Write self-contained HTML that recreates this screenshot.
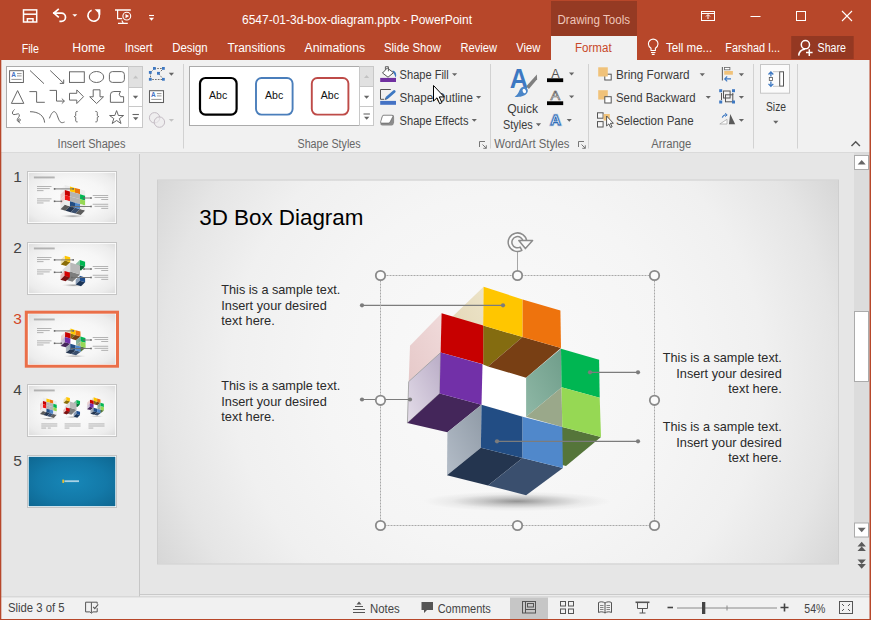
<!DOCTYPE html>
<html><head><meta charset="utf-8"><title>PowerPoint</title>
<style>
html,body{margin:0;padding:0;background:#e6e6e6;overflow:hidden}
svg{display:block;font-family:"Liberation Sans",sans-serif}
</style></head><body>
<svg width="871" height="620" viewBox="0 0 871 620">
<rect x="0" y="0" width="871" height="620" fill="#e6e6e6"/>
<rect x="0" y="0" width="871" height="60" fill="#b7472a"/>
<rect x="551" y="1" width="86" height="35" fill="#953a23"/>
<rect x="551" y="36" width="86" height="24" fill="#f1f1f1"/>
<rect x="791.2" y="36" width="62.5" height="23" fill="#943822"/>
<text x="242" y="23.5" font-size="12" fill="#fff" text-anchor="start" textLength="230" lengthAdjust="spacingAndGlyphs">6547-01-3d-box-diagram.pptx - PowerPoint</text>
<text x="557.5" y="23.8" font-size="12" fill="#efc6b9" text-anchor="start" textLength="72.5" lengthAdjust="spacingAndGlyphs">Drawing Tools</text>
<text x="21.7" y="52.5" font-size="12.3" fill="#fff" text-anchor="start" textLength="17.2" lengthAdjust="spacingAndGlyphs">File</text>
<text x="72.3" y="51.7" font-size="12.3" fill="#fff" text-anchor="start" textLength="32.7" lengthAdjust="spacingAndGlyphs">Home</text>
<text x="124.7" y="51.7" font-size="12.3" fill="#fff" text-anchor="start" textLength="27.9" lengthAdjust="spacingAndGlyphs">Insert</text>
<text x="172.2" y="51.7" font-size="12.3" fill="#fff" text-anchor="start" textLength="35.5" lengthAdjust="spacingAndGlyphs">Design</text>
<text x="227.4" y="51.7" font-size="12.3" fill="#fff" text-anchor="start" textLength="57.8" lengthAdjust="spacingAndGlyphs">Transitions</text>
<text x="304.5" y="51.7" font-size="12.3" fill="#fff" text-anchor="start" textLength="60.6" lengthAdjust="spacingAndGlyphs">Animations</text>
<text x="384" y="51.7" font-size="12.3" fill="#fff" text-anchor="start" textLength="56.9" lengthAdjust="spacingAndGlyphs">Slide Show</text>
<text x="460.5" y="51.7" font-size="12.3" fill="#fff" text-anchor="start" textLength="36.5" lengthAdjust="spacingAndGlyphs">Review</text>
<text x="516.3" y="51.7" font-size="12.3" fill="#fff" text-anchor="start" textLength="24.1" lengthAdjust="spacingAndGlyphs">View</text>
<text x="575" y="51.7" font-size="12.3" fill="#c8482a" text-anchor="start" textLength="36.6" lengthAdjust="spacingAndGlyphs">Format</text>
<text x="666" y="51.7" font-size="12.3" fill="#fff" text-anchor="start" textLength="46.2" lengthAdjust="spacingAndGlyphs">Tell me...</text>
<text x="725.3" y="51.7" font-size="12.3" fill="#fff" text-anchor="start" textLength="54.8" lengthAdjust="spacingAndGlyphs">Farshad I...</text>
<text x="817.6" y="51.7" font-size="12.3" fill="#fff" text-anchor="start" textLength="28.3" lengthAdjust="spacingAndGlyphs">Share</text>
<g fill="none" stroke="#fff" stroke-width="1.1"><path d="M651 50.5v-2.2c-1.6-1.2-2.6-2.6-2.6-4.4a4.8 4.8 0 0 1 9.6 0c0 1.8-1 3.2-2.6 4.4v2.2z"/><path d="M651 52.5h4.4M651.8 54.4h2.8"/></g>
<g fill="none" stroke="#fff" stroke-width="1.500"><circle cx="805.400" cy="44.700" r="4.100"/><path d="M798.700 55.600c0.300-3.600 2.700-5.900 6.200-6.300"/><path d="M806 52.500h6.600M809.300 49.200v6.700"/></g>
<g fill="none" stroke="#fff" stroke-width="1"><rect x="701.5" y="11.5" width="13" height="9"/><path d="M701.5 13.5h13"/><path d="M708 19v-4M706 16.5l2-2 2 2"/></g>
<path d="M750.5 16.5h10" stroke="#fff" stroke-width="1"/>
<rect x="796.5" y="11.5" width="9" height="9" fill="none" stroke="#fff" stroke-width="1"/>
<path d="M842 11l10 10M852 11l-10 10" stroke="#fff" stroke-width="1.1" fill="none"/>
<g fill="none" stroke="#fff" stroke-width="1.5"><rect x="23.5" y="9.9" width="13.2" height="12.1"/><path d="M23.5 14.2h13.2"/><path d="M27.4 22v-3.2h5.600v3.200"/></g>
<g fill="none" stroke="#fff" stroke-width="1.700"><path d="M53 13.100h8.400a4.100 4.100 0 0 1 0 8.200h-2" /><path d="M58.800 8.900l-4.900 4.200 4.900 4.200"/></g>
<path d="M72.3 14.2h5l-2.5 2.6z" fill="#fff"/>
<g fill="none" stroke="#fff" stroke-width="1.600"><path d="M91.600 10.200a5.700 5.700 0 1 0 7.200 2.800"/><path d="M94.600 9.300h5.800v5.800z" fill="#fff" stroke="none"/></g>
<g fill="none" stroke="#fff"><path d="M115 10h15.800" stroke-width="1.500"/><path d="M117.600 10v8.700h4.600" stroke-width="1.200"/><circle cx="126.800" cy="16.100" r="3.900" stroke-width="1.100"/><path d="M121.800 20.500l1.400 2.500M118 23.400h9.800" stroke-width="1.100"/></g><path d="M125.500 13.900l3.600 2.200-3.600 2.200z" fill="#fff"/>
<path d="M149 15.500h5" stroke="#fff" stroke-width="1.100"/>
<path d="M149.0 17.8h5l-2.5 3z" fill="#fff"/>
<rect x="1" y="60" width="869" height="92.300" fill="#f1f1f1"/>
<rect x="1" y="152" width="869" height="1" fill="#dadada"/>
<rect x="183.0" y="64" width="1" height="84.5" fill="#d2d2d2"/>
<rect x="490.0" y="64" width="1" height="84.5" fill="#d2d2d2"/>
<rect x="588.0" y="64" width="1" height="84.5" fill="#d2d2d2"/>
<rect x="753.0" y="64" width="1" height="84.5" fill="#d2d2d2"/>
<rect x="797.0" y="64" width="1" height="84.5" fill="#d2d2d2"/>
<rect x="6.5" y="66.5" width="136" height="61" fill="#fff" stroke="#ababab" stroke-width="1"/>
<rect x="128.5" y="66.5" width="14" height="21" fill="#e1e1e1" stroke="#c8c8c8" stroke-width="1"/>
<rect x="128.5" y="87.5" width="14" height="19" fill="#fff" stroke="#c8c8c8" stroke-width="1"/>
<rect x="128.5" y="106.5" width="14" height="21" fill="#fff" stroke="#c8c8c8" stroke-width="1"/>
<path d="M133 78.5l2.6-3 2.6 3z" fill="#c3c3c3"/>
<path d="M132.8 95.8h5.4l-2.7 3z" fill="#666"/>
<path d="M132.5 114.5h6.4" stroke="#666" stroke-width="1.1"/>
<path d="M133.0 117.2h5.4l-2.7 3z" fill="#666"/>
<g fill="none" stroke="#606060" stroke-width="0.95" stroke-linejoin="miter">
<rect x="9.6" y="70.7" width="13.8" height="11.8" fill="#fff"/>
<path d="M30 70.5l14 13.2"/>
<path d="M50.2 70.5l13.4 12.8M63.7 79.6v3.8h-3.9"/>
<rect x="69.5" y="71.8" width="14.8" height="10.6"/>
<ellipse cx="96.5" cy="77" rx="7.2" ry="5.5"/>
<rect x="109.4" y="71.6" width="15" height="10.8" rx="3" ry="3"/>
<path d="M17.6 90.6l6.2 12.8h-12.4z"/>
<path d="M29.4 91.6h7.2v10.7h8.2"/>
<path d="M49.6 90.4h6.9v10.7h7.8M61.8 98.6l2.6 2.5-2.6 2.5"/>
<path d="M69.5 93.3h7.3v-3.4l6.7 6.8-6.7 6.8v-3.4h-7.3z"/>
<path d="M93.2 89.8h6.8v7h3.5l-6.9 6.7-6.9-6.700h3.500z"/>
<path d="M110.400 102.300v-7.500q0-3.300 3.500-3.300h6.600q-2.600 2.800 0 5.200h3.100v5.600z"/>
<path d="M14.600 109.500C12 111.500 11.600 114.500 14 114.600C16.500 114.700 18.500 112.800 19.300 114.600C20.200 116.800 16.400 118.800 17.200 120.600C17.800 122 20.600 121.400 20.400 119.800C20.200 118.400 18 118.800 18.200 120.600C18.400 121.800 19.400 122.600 20 123.300"/>
<path d="M30 111.700c8.600 0 14.200 4 14.600 10.900"/>
<path d="M49.400 118.400c3.200-8.600 6-8.900 8.400-1.400c2.200 6.400 3.800 6.200 6.800 5"/>
<path d="M77.600 111.400c-1.900 0-1.900 0.500-1.900 2v1.600c0 1-0.400 1.500-1.500 1.600c1.100 0.100 1.500 0.600 1.500 1.600v1.700c0 1.500 0 2 1.900 2"/>
<path d="M95.400 111.400c1.900 0 1.900 0.500 1.900 2v1.600c0 1 0.400 1.500 1.500 1.600c-1.100 0.100-1.500 0.600-1.500 1.600v1.700c0 1.500 0 2-1.900 2"/>
<path d="M116.600 110.600l1.800 4.900h5.200l-4.200 3.100 1.600 4.900-4.400-3-4.400 3 1.600-4.900-4.200-3.100h5.200z"/>
</g>
<g><text x="11.2" y="77.10000000000001" font-size="6.5" font-weight="bold" fill="#4472c4">A</text><path d="M17.0 73.60000000000001h4.6M17.0 75.9h4.6M11.4 79.4h10.2" stroke="#8a8a8a" stroke-width="0.9" fill="none"/></g>
<g fill="none" stroke="#5e5e5e" stroke-width="0.9" stroke-dasharray="1.6 1.2"><path d="M150.500 72.500l4-4h9l-5 5 5 6h-13z"/></g>
<rect x="153.0" y="67.0" width="2.800" height="2.800" fill="#3d78c2"/>
<rect x="162.0" y="67.0" width="2.800" height="2.800" fill="#3d78c2"/>
<rect x="148.9" y="71.0" width="2.800" height="2.800" fill="#3d78c2"/>
<rect x="157.0" y="71.9" width="2.800" height="2.800" fill="#3d78c2"/>
<rect x="148.9" y="77.9" width="2.800" height="2.800" fill="#3d78c2"/>
<rect x="162.0" y="77.9" width="2.800" height="2.800" fill="#3d78c2"/>
<path d="M168.8 72.85h5.2l-2.6 2.9z" fill="#666"/>
<rect x="149.500" y="90.700" width="14" height="11.800" fill="#fff" stroke="#606060" stroke-width="1.050"/>
<g><text x="151.1" y="97.10000000000001" font-size="6.5" font-weight="bold" fill="#4472c4">A</text><path d="M156.9 93.60000000000001h4.6M156.9 95.9h4.6M151.3 99.4h10.2" stroke="#8a8a8a" stroke-width="0.9" fill="none"/></g>
<g fill="#efecef" fill-opacity="0.6" stroke="#c4bcc4" stroke-width="1"><circle cx="154.600" cy="117.800" r="5.200"/><circle cx="159.400" cy="122.100" r="5.200"/></g>
<path d="M168.8 118.95h5.2l-2.6 2.9z" fill="#c3c3c3"/>
<text x="57.6" y="148" font-size="12" fill="#666666" text-anchor="start" textLength="67.9" lengthAdjust="spacingAndGlyphs">Insert Shapes</text>
<rect x="189.500" y="66.500" width="184" height="59" fill="#fff" stroke="#ababab" stroke-width="1"/>
<rect x="359.500" y="66.500" width="14" height="20" fill="#e1e1e1" stroke="#c8c8c8" stroke-width="1"/>
<rect x="359.500" y="86.500" width="14" height="20" fill="#fff" stroke="#c8c8c8" stroke-width="1"/>
<rect x="359.500" y="106.500" width="14" height="19" fill="#fff" stroke="#c8c8c8" stroke-width="1"/>
<path d="M364 78l2.600-3 2.600 3z" fill="#c3c3c3"/>
<path d="M363.90000000000003 95.8h5.4l-2.7 3z" fill="#666"/>
<path d="M363.500 114h6.400" stroke="#666" stroke-width="1.100"/>
<path d="M364.0 116.7h5.4l-2.7 3z" fill="#666"/>
<rect x="200" y="78" width="36.600" height="36.600" rx="5.500" fill="#fff" stroke="#000" stroke-width="2.2"/>
<text x="209" y="99.2" font-size="10.5" fill="#111" text-anchor="start" textLength="18.2" lengthAdjust="spacingAndGlyphs">Abc</text>
<rect x="256" y="78" width="36.600" height="36.600" rx="5.500" fill="#fff" stroke="#4a7ebb" stroke-width="1.9"/>
<text x="265" y="99.2" font-size="10.5" fill="#111" text-anchor="start" textLength="18.2" lengthAdjust="spacingAndGlyphs">Abc</text>
<rect x="311.8" y="78" width="36.600" height="36.600" rx="5.500" fill="#fff" stroke="#be4b48" stroke-width="1.9"/>
<text x="320.8" y="99.2" font-size="10.5" fill="#111" text-anchor="start" textLength="18.2" lengthAdjust="spacingAndGlyphs">Abc</text>
<text x="297.5" y="148" font-size="12" fill="#666666" text-anchor="start" textLength="63.1" lengthAdjust="spacingAndGlyphs">Shape Styles</text>
<text x="399.6" y="79" font-size="12.3" fill="#3b3b3b" text-anchor="start" textLength="49.2" lengthAdjust="spacingAndGlyphs">Shape Fill</text>
<path d="M452.0 73.14999999999999h5.2l-2.6 2.9z" fill="#666"/>
<text x="399.6" y="102" font-size="12.3" fill="#3b3b3b" text-anchor="start" textLength="73.4" lengthAdjust="spacingAndGlyphs">Shape Outline</text>
<path d="M476.0 95.95h5.2l-2.6 2.9z" fill="#666"/>
<text x="399.6" y="125" font-size="12.3" fill="#3b3b3b" text-anchor="start" textLength="68.9" lengthAdjust="spacingAndGlyphs">Shape Effects</text>
<path d="M471.7 118.95h5.2l-2.6 2.9z" fill="#666"/>
<rect x="380.200" y="77.900" width="15.800" height="4.100" fill="#7030a0"/>
<path d="M392.600 70.400c2.400 0.300 3.900 2.400 3.600 5.400c-0.100 0.700-0.400 1.300-0.800 1.800c-0.300-2.200-1.200-4-2.800-5.400z" fill="#3d78c2"/>
<g fill="#fff" stroke="#555" stroke-width="1" stroke-linejoin="round"><path d="M382.500 73l4.800-5 6.200 4.700-5.500 4.500z"/><path d="M385.400 69.800v-3.100h3v4.600" fill="none" stroke-width="0.900"/></g>
<rect x="380.200" y="100.900" width="15.800" height="3.900" fill="#4472c4"/>
<g fill="none" stroke="#555" stroke-width="1"><path d="M390.800 89.500h-10.300v9.800h3.800"/></g><path d="M385 99.800l0.700-2.800 7.500-6.500a1.400 1.400 0 0 1 2 2l-7.500 6.500z" fill="#3d78c2"/><path d="M385 99.800l0.500-1.900 1.300 1.300z" fill="#555"/>
<path d="M383.600 115h8.600q2.200 0 1.900 2.200v5.200q-0.300 2.600-2.600 3h-9q-2.600-0.200-2-2.400l1.300-6q0.400-2 1.800-2z" fill="#8c8c8c"/><path d="M383.800 115.200h8.200q1.600 0 0.800 1.500l-2.800 5.400q-0.500 1-1.700 1h-6.600q-1.500 0-1-1.500l1.700-5.300q0.400-1.100 1.400-1.100z" fill="#fff" stroke="#666" stroke-width="0.700"/>
<g fill="none" stroke="#777" stroke-width="1"><path d="M479.5 147.0v-5.500h5.500"/><path d="M482.5 144.5l3.800 3.800M486.3 145.3v3h-3"/></g>
<g fill="none" stroke="#777" stroke-width="1"><path d="M578.5 147.0v-5.500h5.500"/><path d="M581.5 144.5l3.800 3.800M585.3 145.3v3h-3"/></g>
<text x="509.700" y="88.100" font-size="27.400" font-weight="bold" fill="#3d78c2" textLength="18.300" lengthAdjust="spacingAndGlyphs">A</text>
<path d="M536.900 74.600l-10.600 11.600 2.600 2.800 8.200-9.800z" fill="#7f7f7f"/><path d="M525.600 87c-3-0.900-5.200 0.900-6.200 3.600c-0.900 2.600-2.400 4.600-4.800 6.200c5.200 0.700 10.800-0.500 12.800-4.200c0.900-1.700 0.500-4-1.800-5.600z" fill="#4a86c8"/><ellipse cx="524.300" cy="91" rx="1.600" ry="2.300" fill="#fff" transform="rotate(-25 524.300 91)"/>
<text x="507.2" y="113" font-size="12.3" fill="#3b3b3b" text-anchor="start" textLength="30.8" lengthAdjust="spacingAndGlyphs">Quick</text>
<text x="503.1" y="129" font-size="12.3" fill="#3b3b3b" text-anchor="start" textLength="29.6" lengthAdjust="spacingAndGlyphs">Styles</text>
<path d="M535.9 123.25h5.2l-2.6 2.9z" fill="#666"/>
<text x="551.200" y="77.700" font-size="12.800" fill="#555" textLength="8.400" lengthAdjust="spacingAndGlyphs">A</text>
<rect x="547" y="78.300" width="16.200" height="3.800" fill="#000"/>
<path d="M569.0 72.55h5.2l-2.6 2.9z" fill="#666"/>
<text x="550.600" y="99.600" font-size="13.300" fill="#fff" stroke="#555" stroke-width="0.650" textLength="9.600" lengthAdjust="spacingAndGlyphs">A</text>
<rect x="547" y="101.300" width="16.200" height="3.800" fill="#000"/>
<path d="M569.0 95.45h5.2l-2.6 2.9z" fill="#666"/>
<text x="550.200" y="125" font-size="15" font-weight="bold" fill="#fff" stroke="#3d78c2" stroke-width="2.600" stroke-opacity="0.350" textLength="10.600" lengthAdjust="spacingAndGlyphs">A</text>
<text x="550.200" y="125" font-size="15" font-weight="bold" fill="#fff" stroke="#2f6db8" stroke-width="1" textLength="10.600" lengthAdjust="spacingAndGlyphs">A</text>
<path d="M566.6999999999999 118.95h5.2l-2.6 2.9z" fill="#666"/>
<text x="494.3" y="148" font-size="12" fill="#666666" text-anchor="start" textLength="75.2" lengthAdjust="spacingAndGlyphs">WordArt Styles</text>
<text x="616" y="79" font-size="12.3" fill="#3b3b3b" text-anchor="start" textLength="73.6" lengthAdjust="spacingAndGlyphs">Bring Forward</text>
<path d="M699.6999999999999 73.25h5.2l-2.6 2.9z" fill="#666"/>
<text x="616" y="102" font-size="12.3" fill="#3b3b3b" text-anchor="start" textLength="79.6" lengthAdjust="spacingAndGlyphs">Send Backward</text>
<path d="M705.6999999999999 95.95h5.2l-2.6 2.9z" fill="#666"/>
<text x="616" y="125" font-size="12.3" fill="#3b3b3b" text-anchor="start" textLength="77.6" lengthAdjust="spacingAndGlyphs">Selection Pane</text>
<rect x="604.800" y="74.200" width="6.400" height="5.800" fill="#fff" stroke="#555" stroke-width="1"/><rect x="598.200" y="67.300" width="9.600" height="9.200" fill="#f0c27a"/>
<rect x="598.200" y="90.200" width="9.600" height="9.300" fill="#f0c27a"/><rect x="604.800" y="96.700" width="6.400" height="6.300" fill="#fff" stroke="#555" stroke-width="1"/>
<g fill="#f8f8f8" stroke="#555" stroke-width="1"><rect x="597.500" y="112.800" width="5.600" height="5.400"/><rect x="597.500" y="121.600" width="5.600" height="5.400"/></g><rect x="603.600" y="114" width="6.200" height="6.500" fill="#f0c27a"/><path d="M606.600 116v10l2.300-2.100 1.700 3.600 1.500-0.700-1.700-3.500h3z" fill="#fff" stroke="#444" stroke-width="0.900" stroke-linejoin="round"/>
<path d="M722.400 67v13.600" stroke="#666" stroke-width="1.100"/><rect x="724.500" y="67.400" width="5.400" height="2.400" fill="#fff" stroke="#666" stroke-width="0.800"/><rect x="724.200" y="71" width="8.700" height="3.700" fill="#f0c27a"/><path d="M731 78.900h-6.400M727.200 76.500l-2.500 2.400 2.500 2.400" fill="none" stroke="#3d78c2" stroke-width="1.100"/>
<path d="M738.8 73.25h5.2l-2.6 2.9z" fill="#666"/>
<g fill="none" stroke="#555" stroke-width="1"><rect x="723.500" y="91" width="6.600" height="7"/><rect x="725.500" y="94.800" width="7.300" height="7"/><path d="M721.500 93v7M732.800 93v2"/></g>
<rect x="719.2" y="89.2" width="3" height="3" fill="#3d78c2"/>
<rect x="732.0" y="89.2" width="3" height="3" fill="#3d78c2"/>
<rect x="719.2" y="100.5" width="3" height="3" fill="#3d78c2"/>
<rect x="732.0" y="100.5" width="3" height="3" fill="#3d78c2"/>
<path d="M738.8 95.95h5.2l-2.6 2.9z" fill="#666"/>
<path d="M719.800 124h7.200v-4.700z" fill="#fff" stroke="#aaa" stroke-width="0.800"/><path d="M728.900 124.300h6.300l-5-10.300z" fill="#5a5a5a"/><path d="M722.300 117.600c0.400-1.700 1.800-2.700 4-2.800" fill="none" stroke="#3d78c2" stroke-width="1.100"/><path d="M725.200 113.200l2 1.700-2 1.700" fill="none" stroke="#3d78c2" stroke-width="1"/>
<path d="M738.8 118.95h5.2l-2.6 2.9z" fill="#666"/>
<text x="651.2" y="148" font-size="12" fill="#666666" text-anchor="start" textLength="40.1" lengthAdjust="spacingAndGlyphs">Arrange</text>
<rect x="760.500" y="64.500" width="29" height="28.700" fill="#fbfbfb" stroke="#c6c6c6" stroke-width="1"/>
<rect x="779.700" y="71.800" width="3.800" height="14.300" fill="#fff" stroke="#555" stroke-width="1"/>
<g fill="none" stroke="#3d78c2" stroke-width="1.300"><path d="M770.900 72v4.600M768.500 74.500l2.400-2.500 2.400 2.500M770.900 86.400v-4.800M768.500 83.900l2.400 2.500 2.400-2.500"/></g><rect x="769.300" y="77.500" width="3.300" height="3" fill="#fff" stroke="#555" stroke-width="0.800"/><path d="M773.500 71.700h6M773.500 86.300h6" stroke="#777" stroke-width="0.800" stroke-dasharray="1 1"/>
<text x="766" y="111" font-size="12.3" fill="#3b3b3b" text-anchor="start" textLength="20" lengthAdjust="spacingAndGlyphs">Size</text>
<path d="M773.1999999999999 120.75h5.2l-2.6 2.9z" fill="#666"/>
<path d="M851.500 146l4.200-4.200 4.200 4.200" fill="none" stroke="#555" stroke-width="1.500"/>
<path d="M433.500 85.500v15.600l3.500-3.300 2.600 5.900 2.300-1-2.600-5.800h4.900z" fill="#fff" stroke="#000" stroke-width="1" stroke-linejoin="miter"/>
<rect x="139" y="154" width="1" height="442.500" fill="#c6c6c6"/>
<defs><radialGradient id="thumbbg" cx="50%" cy="50%" r="68%"><stop offset="0" stop-color="#fcfcfc"/><stop offset="0.550" stop-color="#f6f6f6"/><stop offset="0.850" stop-color="#ececec"/><stop offset="1" stop-color="#e0e0e0"/></radialGradient></defs>
<rect x="27.500" y="171.5" width="89" height="52" fill="#fff" stroke="#c4c4c4" stroke-width="1"/>
<rect x="28.700" y="172.8" width="86.600" height="49.400" fill="url(#thumbbg)"/>
<rect x="33.9" y="176.5" width="20.800" height="1.900" fill="#8a8a8a" opacity="0.600"/>
<rect x="37.00" y="186.10" width="14.50" height="0.9" fill="#9a9a9a" opacity="0.8"/>
<rect x="37.00" y="188.15" width="12.76" height="0.9" fill="#9a9a9a" opacity="0.8"/>
<rect x="37.00" y="190.20" width="6.53" height="0.9" fill="#9a9a9a" opacity="0.8"/>
<rect x="37.00" y="198.40" width="14.50" height="0.9" fill="#9a9a9a" opacity="0.8"/>
<rect x="37.00" y="200.45" width="12.76" height="0.9" fill="#9a9a9a" opacity="0.8"/>
<rect x="37.00" y="202.50" width="6.53" height="0.9" fill="#9a9a9a" opacity="0.8"/>
<rect x="92.70" y="195.00" width="15.50" height="0.9" fill="#9a9a9a" opacity="0.8"/>
<rect x="94.56" y="197.05" width="13.64" height="0.9" fill="#9a9a9a" opacity="0.8"/>
<rect x="101.22" y="199.10" width="6.98" height="0.9" fill="#9a9a9a" opacity="0.8"/>
<rect x="92.70" y="203.80" width="15.50" height="0.9" fill="#9a9a9a" opacity="0.8"/>
<rect x="94.56" y="205.85" width="13.64" height="0.9" fill="#9a9a9a" opacity="0.8"/>
<rect x="101.22" y="207.90" width="6.98" height="0.9" fill="#9a9a9a" opacity="0.8"/>
<ellipse cx="72.90" cy="216.10" rx="13.00" ry="1.80" fill="url(#shadow)"/>
<polygon points="64.90,185.10 60.50,189.60 60.50,194.54 64.90,190.04" fill="#f2f2f2"/>
<polygon points="64.90,190.04 60.50,194.54 60.50,199.48 64.90,194.98" fill="#ecc9c9"/>
<polygon points="64.90,194.98 60.50,199.48 60.50,204.42 64.90,199.92" fill="#f0cfcf"/>
<polygon points="64.90,199.92 60.50,204.42 60.50,209.36 64.90,204.86" fill="#e9e9e9"/>
<polygon points="64.90,204.86 69.95,206.26 65.55,210.76 60.50,209.36" fill="#5a5a5a"/>
<polygon points="69.95,206.26 75.00,207.66 70.60,212.16 65.55,210.76" fill="#24354f"/>
<polygon points="75.00,207.66 80.05,209.06 75.65,213.56 70.60,212.16" fill="#3a4f6e"/>
<polygon points="80.05,209.06 85.10,210.46 80.70,214.96 75.65,213.56" fill="#5e5e5e"/>
<polygon points="64.90,185.10 69.95,186.50 69.95,191.44 64.90,190.04" fill="#ececec"/>
<polygon points="69.95,186.50 75.00,187.90 75.00,192.84 69.95,191.44" fill="#ffc600"/>
<polygon points="75.00,187.90 80.05,189.30 80.05,194.24 75.00,192.84" fill="#ee730d"/>
<polygon points="80.05,189.30 85.10,190.70 85.10,195.64 80.05,194.24" fill="#ececec"/>
<polygon points="64.90,190.04 69.95,191.44 69.95,196.38 64.90,194.98" fill="#c70000"/>
<polygon points="69.95,191.44 75.00,192.84 75.00,197.78 69.95,196.38" fill="#b4b4b4"/>
<polygon points="75.00,192.84 80.05,194.24 80.05,199.18 75.00,197.78" fill="#b4b4b4"/>
<polygon points="80.05,194.24 85.10,195.64 85.10,200.58 80.05,199.18" fill="#00b652"/>
<polygon points="64.90,194.98 69.95,196.38 69.95,201.32 64.90,199.92" fill="#f01515"/>
<polygon points="69.95,196.38 75.00,197.78 75.00,202.72 69.95,201.32" fill="#b4b4b4"/>
<polygon points="75.00,197.78 80.05,199.18 80.05,204.12 75.00,202.72" fill="#b4b4b4"/>
<polygon points="80.05,199.18 85.10,200.58 85.10,205.52 80.05,204.12" fill="#96d854"/>
<polygon points="64.90,199.92 69.95,201.32 69.95,206.26 64.90,204.86" fill="#ececec"/>
<polygon points="69.95,201.32 75.00,202.72 75.00,207.66 69.95,206.26" fill="#224d84"/>
<polygon points="75.00,202.72 80.05,204.12 80.05,209.06 75.00,207.66" fill="#5088cb"/>
<polygon points="80.05,204.12 85.10,205.52 85.10,210.46 80.05,209.06" fill="#ececec"/>
<path d="M54.5 188.9H73.2" stroke="#6e6e6e" stroke-width="0.900"/><rect x="53.8" y="188.1" width="1.500" height="1.600" fill="#666"/><rect x="72.5" y="188.1" width="1.500" height="1.600" fill="#666"/>
<path d="M54.5 201.3H61.3" stroke="#6e6e6e" stroke-width="0.900"/><rect x="53.8" y="200.5" width="1.500" height="1.600" fill="#666"/><rect x="60.599999999999994" y="200.5" width="1.500" height="1.600" fill="#666"/>
<path d="M83.9 198H91" stroke="#6e6e6e" stroke-width="0.900"/><rect x="83.2" y="197.2" width="1.500" height="1.600" fill="#666"/><rect x="90.3" y="197.2" width="1.500" height="1.600" fill="#666"/>
<path d="M71.8 206.5H91" stroke="#6e6e6e" stroke-width="0.900"/><rect x="71.1" y="205.7" width="1.500" height="1.600" fill="#666"/><rect x="90.3" y="205.7" width="1.500" height="1.600" fill="#666"/>
<text x="13.3" y="182.3" font-size="15.5" fill="#444" text-anchor="start">1</text>
<rect x="27.500" y="242.5" width="89" height="52" fill="#fff" stroke="#c4c4c4" stroke-width="1"/>
<rect x="28.700" y="243.8" width="86.600" height="49.400" fill="url(#thumbbg)"/>
<rect x="33.9" y="247.5" width="20.800" height="1.900" fill="#8a8a8a" opacity="0.600"/>
<rect x="37.00" y="257.10" width="14.50" height="0.9" fill="#9a9a9a" opacity="0.8"/>
<rect x="37.00" y="259.15" width="12.76" height="0.9" fill="#9a9a9a" opacity="0.8"/>
<rect x="37.00" y="261.20" width="6.53" height="0.9" fill="#9a9a9a" opacity="0.8"/>
<rect x="37.00" y="269.40" width="14.50" height="0.9" fill="#9a9a9a" opacity="0.8"/>
<rect x="37.00" y="271.45" width="12.76" height="0.9" fill="#9a9a9a" opacity="0.8"/>
<rect x="37.00" y="273.50" width="6.53" height="0.9" fill="#9a9a9a" opacity="0.8"/>
<rect x="92.70" y="266.00" width="15.50" height="0.9" fill="#9a9a9a" opacity="0.8"/>
<rect x="94.56" y="268.05" width="13.64" height="0.9" fill="#9a9a9a" opacity="0.8"/>
<rect x="101.22" y="270.10" width="6.98" height="0.9" fill="#9a9a9a" opacity="0.8"/>
<rect x="92.70" y="274.80" width="15.50" height="0.9" fill="#9a9a9a" opacity="0.8"/>
<rect x="94.56" y="276.85" width="13.64" height="0.9" fill="#9a9a9a" opacity="0.8"/>
<rect x="101.22" y="278.90" width="6.98" height="0.9" fill="#9a9a9a" opacity="0.8"/>
<ellipse cx="73.50" cy="285.20" rx="12.00" ry="1.70" fill="url(#shadow)"/>
<polygon points="79.80,260.10 75.70,264.00 75.70,268.85 79.80,264.95" fill="#8fc0a6"/>
<polygon points="79.80,264.95 85.10,266.55 81.00,270.45 75.70,268.85" fill="#0a6e35"/>
<polygon points="79.80,260.10 85.10,261.70 85.10,266.55 79.80,264.95" fill="#00b652"/>
<polygon points="79.80,275.80 75.70,279.70 75.70,284.55 79.80,280.65" fill="#8b9db5"/>
<polygon points="79.80,280.65 85.10,282.25 81.00,286.15 75.70,284.55" fill="#1c3557"/>
<polygon points="79.80,275.80 85.10,277.40 85.10,282.25 79.80,280.65" fill="#1f4f8f"/>
<polygon points="70.20,262.50 62.62,269.71 62.62,278.69 70.20,271.47" fill="#dedede"/>
<polygon points="70.20,271.47 80.00,274.43 72.42,281.65 62.62,278.69" fill="#7d7d7d"/>
<polygon points="70.20,262.50 80.00,265.46 80.00,274.43 70.20,271.47" fill="#b9b9b9"/>
<polygon points="64.90,255.70 60.80,259.60 60.80,264.45 64.90,260.55" fill="#f0e2b0"/>
<polygon points="64.90,260.55 70.20,262.15 66.10,266.05 60.80,264.45" fill="#8a6d08"/>
<polygon points="64.90,255.70 70.20,257.30 70.20,262.15 64.90,260.55" fill="#ffc600"/>
<polygon points="64.50,271.00 60.40,274.90 60.40,279.75 64.50,275.85" fill="#e8bcbc"/>
<polygon points="64.50,275.85 69.80,277.45 65.70,281.35 60.40,279.75" fill="#7a1010"/>
<polygon points="64.50,271.00 69.80,272.60 69.80,277.45 64.50,275.85" fill="#d40000"/>
<path d="M54.5 259.9H73.2" stroke="#6e6e6e" stroke-width="0.900"/><rect x="53.8" y="259.09999999999997" width="1.500" height="1.600" fill="#666"/><rect x="72.5" y="259.09999999999997" width="1.500" height="1.600" fill="#666"/>
<path d="M54.5 272.3H61.3" stroke="#6e6e6e" stroke-width="0.900"/><rect x="53.8" y="271.5" width="1.500" height="1.600" fill="#666"/><rect x="60.599999999999994" y="271.5" width="1.500" height="1.600" fill="#666"/>
<path d="M83.9 269H91" stroke="#6e6e6e" stroke-width="0.900"/><rect x="83.2" y="268.2" width="1.500" height="1.600" fill="#666"/><rect x="90.3" y="268.2" width="1.500" height="1.600" fill="#666"/>
<path d="M71.8 277.5H91" stroke="#6e6e6e" stroke-width="0.900"/><rect x="71.1" y="276.7" width="1.500" height="1.600" fill="#666"/><rect x="90.3" y="276.7" width="1.500" height="1.600" fill="#666"/>
<text x="13.3" y="253.3" font-size="15.5" fill="#444" text-anchor="start">2</text>
<rect x="26.300" y="312.2" width="91.200" height="54" fill="#fff" stroke="#ea6f49" stroke-width="3"/>
<rect x="28.700" y="314.2" width="86.600" height="49.400" fill="url(#thumbbg)"/>
<rect x="28.700" y="314.8" width="86.600" height="49.400" fill="url(#thumbbg)"/>
<rect x="33.9" y="318.5" width="20.800" height="1.900" fill="#8a8a8a" opacity="0.600"/>
<rect x="37.00" y="328.10" width="14.50" height="0.9" fill="#9a9a9a" opacity="0.8"/>
<rect x="37.00" y="330.15" width="12.76" height="0.9" fill="#9a9a9a" opacity="0.8"/>
<rect x="37.00" y="332.20" width="6.53" height="0.9" fill="#9a9a9a" opacity="0.8"/>
<rect x="37.00" y="340.40" width="14.50" height="0.9" fill="#9a9a9a" opacity="0.8"/>
<rect x="37.00" y="342.45" width="12.76" height="0.9" fill="#9a9a9a" opacity="0.8"/>
<rect x="37.00" y="344.50" width="6.53" height="0.9" fill="#9a9a9a" opacity="0.8"/>
<rect x="92.70" y="337.00" width="15.50" height="0.9" fill="#9a9a9a" opacity="0.8"/>
<rect x="94.56" y="339.05" width="13.64" height="0.9" fill="#9a9a9a" opacity="0.8"/>
<rect x="101.22" y="341.10" width="6.98" height="0.9" fill="#9a9a9a" opacity="0.8"/>
<rect x="92.70" y="345.80" width="15.50" height="0.9" fill="#9a9a9a" opacity="0.8"/>
<rect x="94.56" y="347.85" width="13.64" height="0.9" fill="#9a9a9a" opacity="0.8"/>
<rect x="101.22" y="349.90" width="6.98" height="0.9" fill="#9a9a9a" opacity="0.8"/>
<g transform="translate(8.329,291.599) scale(0.12868)"><use href="#cube"/></g>
<path d="M54.5 330.9H73.2" stroke="#6e6e6e" stroke-width="0.900"/><rect x="53.8" y="330.09999999999997" width="1.500" height="1.600" fill="#666"/><rect x="72.5" y="330.09999999999997" width="1.500" height="1.600" fill="#666"/>
<path d="M54.5 343.3H61.3" stroke="#6e6e6e" stroke-width="0.900"/><rect x="53.8" y="342.5" width="1.500" height="1.600" fill="#666"/><rect x="60.599999999999994" y="342.5" width="1.500" height="1.600" fill="#666"/>
<path d="M83.9 340H91" stroke="#6e6e6e" stroke-width="0.900"/><rect x="83.2" y="339.2" width="1.500" height="1.600" fill="#666"/><rect x="90.3" y="339.2" width="1.500" height="1.600" fill="#666"/>
<path d="M71.8 348.5H91" stroke="#6e6e6e" stroke-width="0.900"/><rect x="71.1" y="347.7" width="1.500" height="1.600" fill="#666"/><rect x="90.3" y="347.7" width="1.500" height="1.600" fill="#666"/>
<text x="13.3" y="324.3" font-size="15.5" fill="#d24726" text-anchor="start">3</text>
<rect x="27.500" y="384.5" width="89" height="52" fill="#fff" stroke="#c4c4c4" stroke-width="1"/>
<rect x="28.700" y="385.8" width="86.600" height="49.400" fill="url(#thumbbg)"/>
<rect x="33.900" y="389.5" width="20.800" height="1.900" fill="#8a8a8a" opacity="0.600"/>
<ellipse cx="48.44" cy="418.68" rx="8.84" ry="1.22" fill="url(#shadow)"/>
<polygon points="43.00,397.60 40.01,400.66 40.01,404.02 43.00,400.96" fill="#f2f2f2"/>
<polygon points="43.00,400.96 40.01,404.02 40.01,407.38 43.00,404.32" fill="#ecc9c9"/>
<polygon points="43.00,404.32 40.01,407.38 40.01,410.74 43.00,407.68" fill="#f0cfcf"/>
<polygon points="43.00,407.68 40.01,410.74 40.01,414.10 43.00,411.04" fill="#e9e9e9"/>
<polygon points="43.00,411.04 46.43,411.99 43.44,415.05 40.01,414.10" fill="#5a5a5a"/>
<polygon points="46.43,411.99 49.87,412.94 46.88,416.00 43.44,415.05" fill="#24354f"/>
<polygon points="49.87,412.94 53.30,413.89 50.31,416.95 46.88,416.00" fill="#3a4f6e"/>
<polygon points="53.30,413.89 56.74,414.84 53.74,417.90 50.31,416.95" fill="#5e5e5e"/>
<polygon points="43.00,397.60 46.43,398.55 46.43,401.91 43.00,400.96" fill="#ececec"/>
<polygon points="46.43,398.55 49.87,399.50 49.87,402.86 46.43,401.91" fill="#ffc600"/>
<polygon points="49.87,399.50 53.30,400.46 53.30,403.82 49.87,402.86" fill="#ee730d"/>
<polygon points="53.30,400.46 56.74,401.41 56.74,404.77 53.30,403.82" fill="#ececec"/>
<polygon points="43.00,400.96 46.43,401.91 46.43,405.27 43.00,404.32" fill="#c70000"/>
<polygon points="46.43,401.91 49.87,402.86 49.87,406.22 46.43,405.27" fill="#b4b4b4"/>
<polygon points="49.87,402.86 53.30,403.82 53.30,407.17 49.87,406.22" fill="#b4b4b4"/>
<polygon points="53.30,403.82 56.74,404.77 56.74,408.13 53.30,407.17" fill="#00b652"/>
<polygon points="43.00,404.32 46.43,405.27 46.43,408.63 43.00,407.68" fill="#f01515"/>
<polygon points="46.43,405.27 49.87,406.22 49.87,409.58 46.43,408.63" fill="#b4b4b4"/>
<polygon points="49.87,406.22 53.30,407.17 53.30,410.53 49.87,409.58" fill="#b4b4b4"/>
<polygon points="53.30,407.17 56.74,408.13 56.74,411.49 53.30,410.53" fill="#96d854"/>
<polygon points="43.00,407.68 46.43,408.63 46.43,411.99 43.00,411.04" fill="#ececec"/>
<polygon points="46.43,408.63 49.87,409.58 49.87,412.94 46.43,411.99" fill="#224d84"/>
<polygon points="49.87,409.58 53.30,410.53 53.30,413.89 49.87,412.94" fill="#5088cb"/>
<polygon points="53.30,410.53 56.74,411.49 56.74,414.84 53.30,413.89" fill="#ececec"/>
<ellipse cx="72.14" cy="417.06" rx="8.16" ry="1.16" fill="url(#shadow)"/>
<polygon points="76.42,399.99 73.64,402.64 73.64,405.94 76.42,403.29" fill="#8fc0a6"/>
<polygon points="76.42,403.29 80.03,404.38 77.24,407.03 73.64,405.94" fill="#0a6e35"/>
<polygon points="76.42,399.99 80.03,401.08 80.03,404.38 76.42,403.29" fill="#00b652"/>
<polygon points="76.42,410.67 73.64,413.32 73.64,416.62 76.42,413.97" fill="#8b9db5"/>
<polygon points="76.42,413.97 80.03,415.05 77.24,417.71 73.64,416.62" fill="#1c3557"/>
<polygon points="76.42,410.67 80.03,411.76 80.03,415.05 76.42,413.97" fill="#1f4f8f"/>
<polygon points="69.90,401.62 64.74,406.53 64.74,412.63 69.90,407.73" fill="#dedede"/>
<polygon points="69.90,407.73 76.56,409.74 71.41,414.64 64.74,412.63" fill="#7d7d7d"/>
<polygon points="69.90,401.62 76.56,403.64 76.56,409.74 69.90,407.73" fill="#b9b9b9"/>
<polygon points="66.29,397.00 63.50,399.65 63.50,402.95 66.29,400.30" fill="#f0e2b0"/>
<polygon points="66.29,400.30 69.90,401.39 67.11,404.04 63.50,402.95" fill="#8a6d08"/>
<polygon points="66.29,397.00 69.90,398.09 69.90,401.39 66.29,400.30" fill="#ffc600"/>
<polygon points="66.02,407.40 63.23,410.06 63.23,413.35 66.02,410.70" fill="#e8bcbc"/>
<polygon points="66.02,410.70 69.62,411.79 66.84,414.44 63.23,413.35" fill="#7a1010"/>
<polygon points="66.02,407.40 69.62,408.49 69.62,411.79 66.02,410.70" fill="#d40000"/>
<g transform="translate(51.388,372.275) scale(0.08750)"><use href="#cube"/></g>
<rect x="41.30" y="423.50" width="16.00" height="0.9" fill="#9a9a9a" opacity="0.8"/>
<rect x="41.30" y="425.55" width="16.00" height="0.9" fill="#9a9a9a" opacity="0.8"/>
<rect x="41.30" y="427.60" width="4.80" height="0.9" fill="#9a9a9a" opacity="0.8"/>
<rect x="64.60" y="423.50" width="16.00" height="0.9" fill="#9a9a9a" opacity="0.8"/>
<rect x="64.60" y="425.55" width="16.00" height="0.9" fill="#9a9a9a" opacity="0.8"/>
<rect x="64.60" y="427.60" width="4.80" height="0.9" fill="#9a9a9a" opacity="0.8"/>
<rect x="88.50" y="423.50" width="16.00" height="0.9" fill="#9a9a9a" opacity="0.8"/>
<rect x="88.50" y="425.55" width="16.00" height="0.9" fill="#9a9a9a" opacity="0.8"/>
<rect x="88.50" y="427.60" width="4.80" height="0.9" fill="#9a9a9a" opacity="0.8"/>
<rect x="47.800" y="427.6" width="3" height="0.900" fill="#9a9a9a" opacity="0.800"/>
<text x="13.3" y="395.3" font-size="15.5" fill="#444" text-anchor="start">4</text>
<defs><radialGradient id="blue5" cx="50%" cy="50%" r="72%"><stop offset="0" stop-color="#1787b8"/><stop offset="0.550" stop-color="#1379a8"/><stop offset="1" stop-color="#0e6690"/></radialGradient></defs>
<rect x="27.500" y="455.5" width="89" height="52" fill="#fff" stroke="#c4c4c4" stroke-width="1"/>
<rect x="28.700" y="456.8" width="86.600" height="49.400" fill="url(#blue5)"/>
<rect x="62.300" y="479.6" width="1.800" height="3.300" fill="#e8c030"/><rect x="64.500" y="480.3" width="14.500" height="1.800" fill="#e8f4fa" opacity="0.700"/>
<text x="13.3" y="466.3" font-size="15.5" fill="#444" text-anchor="start">5</text>
<defs>
<radialGradient id="slidebg" gradientUnits="userSpaceOnUse" cx="498" cy="372" r="392" fx="498" fy="372">
<stop offset="0" stop-color="#fafafa"/><stop offset="0.45" stop-color="#f5f5f5"/><stop offset="0.68" stop-color="#f0f0f0"/><stop offset="0.86" stop-color="#e5e5e5"/><stop offset="1" stop-color="#d6d6d6"/>
</radialGradient>
<radialGradient id="shadow" cx="50%" cy="50%" r="50%">
<stop offset="0" stop-color="#000" stop-opacity="0.400"/><stop offset="0.350" stop-color="#000" stop-opacity="0.200"/><stop offset="0.700" stop-color="#000" stop-opacity="0.050"/><stop offset="1" stop-color="#000" stop-opacity="0"/>
</radialGradient>
<linearGradient id="gPink" x1="0" y1="1" x2="1" y2="0"><stop offset="0" stop-color="#e6c9c9"/><stop offset="1" stop-color="#f0dada"/></linearGradient>
<linearGradient id="gLav" x1="0" y1="1" x2="1" y2="0"><stop offset="0" stop-color="#e4dde9"/><stop offset="1" stop-color="#b9acc6"/></linearGradient>
<linearGradient id="gGrey" x1="0" y1="1" x2="1" y2="0"><stop offset="0" stop-color="#b4bdc8"/><stop offset="1" stop-color="#8f9aa6"/></linearGradient>
<linearGradient id="gTeal" x1="0" y1="1" x2="1" y2="0"><stop offset="0" stop-color="#8fb8a6"/><stop offset="1" stop-color="#6f9d8a"/></linearGradient>
<linearGradient id="gTan" x1="0" y1="1" x2="1" y2="0"><stop offset="0" stop-color="#e2d6b4"/><stop offset="1" stop-color="#ece3c8"/></linearGradient>
<g id="cube">
<ellipse cx="517" cy="501.300" rx="94" ry="10" fill="url(#shadow)"/>
<polygon points="482.5,364.2 526.1,377.7 526.1,416.8 481.5,404.8" fill="#ffffff"/>
<polygon points="483.6,286.8 450.5,318.5 450,357 483.2,325.5" fill="url(#gTan)"/>
<polygon points="441.6,313.3 410,345.8 408.7,381.6 440.6,352.6" fill="url(#gPink)"/>
<polygon points="440.6,352.6 408.7,381.6 407.4,423 439.7,393.5" fill="url(#gLav)" stroke="#9a9a9a" stroke-width="0.8"/>
<polygon points="483.2,325.5 522.6,337.1 488,366.4 483.2,364.6" fill="#846c10"/>
<polygon points="522.6,337.1 561,348.1 526.1,377.7 488,366.4" fill="#783f14"/>
<polygon points="561,348.7 526.1,377.7 526.1,416.8 561.5,387.4" fill="url(#gTeal)"/>
<polygon points="561.5,387.4 526.1,416.8 562.3,427" fill="#9aa88a"/>
<polygon points="562.3,427 601,437.1 566,466 527,456" fill="#55753a"/>
<polygon points="439.7,393.5 481.5,404.8 447.4,432.3 407.4,423" fill="#44265a"/>
<polygon points="481.5,404.8 447.4,432.3 447,475.2 480.9,447.7" fill="url(#gGrey)"/>
<polygon points="480.9,447.7 522.6,458 488,485.5 447,475.2" fill="#24354f"/>
<polygon points="522.6,458 562.9,468 526.1,495.2 488,485.5" fill="#3a4f6e"/>
<polygon points="483.6,286.8 522.6,299.4 522.6,337.1 483.2,325.5" fill="#ffc600"/>
<polygon points="522.6,299.4 560.4,310.4 561,348.1 522.6,337.1" fill="#ee730d"/>
<polygon points="441.6,313.3 483.2,325.5 483.2,364.2 440.6,352.6" fill="#c70000"/>
<polygon points="440.6,352.6 482.5,364.2 481.5,404.8 439.7,393.5" fill="#7230a8"/>
<polygon points="561,348.7 599.1,359.7 599.7,397.8 561.5,387.3" fill="#00b652"/>
<polygon points="561.5,387.2 599.7,397.8 601,437.1 562.3,427" fill="#96d854"/>
<polygon points="481.5,404.8 522.6,416.8 522.6,458 480.9,447.7" fill="#224d84"/>
<polygon points="522.6,416.8 562.3,427 562.9,468 522.6,458" fill="#5088cb"/>
</g>
</defs>
<rect x="158" y="180.500" width="680" height="383" fill="url(#slidebg)"/>
<rect x="157.500" y="180" width="681" height="384" fill="none" stroke="#cfcfcf" stroke-width="1"/>
<use href="#cube"/>
<path d="M362 305.3H503" stroke="#7c7c7c" stroke-width="1.200"/><circle cx="362" cy="305.3" r="2.100" fill="#7c7c7c"/><circle cx="503" cy="305.3" r="2.100" fill="#7c7c7c"/>
<path d="M362 399.5H410" stroke="#7c7c7c" stroke-width="1.200"/><circle cx="362" cy="399.5" r="2.100" fill="#7c7c7c"/><circle cx="410" cy="399.5" r="2.100" fill="#7c7c7c"/>
<path d="M590 372.3H638" stroke="#7c7c7c" stroke-width="1.200"/><circle cx="590" cy="372.3" r="2.100" fill="#7c7c7c"/><circle cx="638" cy="372.3" r="2.100" fill="#7c7c7c"/>
<path d="M497 441.3H638" stroke="#7c7c7c" stroke-width="1.200"/><circle cx="497" cy="441.3" r="2.100" fill="#7c7c7c"/><circle cx="638" cy="441.3" r="2.100" fill="#7c7c7c"/>
<text x="199.2" y="225.3" font-size="22" fill="#000" text-anchor="start" textLength="164.2" lengthAdjust="spacingAndGlyphs">3D Box Diagram</text>
<text x="221.3" y="293.7" font-size="13.3" fill="#2a2a2a" text-anchor="start" textLength="119" lengthAdjust="spacingAndGlyphs">This is a sample text.</text>
<text x="221.3" y="309.5" font-size="13.3" fill="#2a2a2a" text-anchor="start" textLength="105.5" lengthAdjust="spacingAndGlyphs">Insert your desired</text>
<text x="221.3" y="325" font-size="13.3" fill="#2a2a2a" text-anchor="start" textLength="53.5" lengthAdjust="spacingAndGlyphs">text here.</text>
<text x="221.3" y="390" font-size="13.3" fill="#2a2a2a" text-anchor="start" textLength="119" lengthAdjust="spacingAndGlyphs">This is a sample text.</text>
<text x="221.3" y="405.7" font-size="13.3" fill="#2a2a2a" text-anchor="start" textLength="105.5" lengthAdjust="spacingAndGlyphs">Insert your desired</text>
<text x="221.3" y="421.3" font-size="13.3" fill="#2a2a2a" text-anchor="start" textLength="53.5" lengthAdjust="spacingAndGlyphs">text here.</text>
<text x="781.8" y="362.2" font-size="13.3" fill="#2a2a2a" text-anchor="end" textLength="119" lengthAdjust="spacingAndGlyphs">This is a sample text.</text>
<text x="781.8" y="377.9" font-size="13.3" fill="#2a2a2a" text-anchor="end" textLength="105.5" lengthAdjust="spacingAndGlyphs">Insert your desired</text>
<text x="781.8" y="392.9" font-size="13.3" fill="#2a2a2a" text-anchor="end" textLength="53.5" lengthAdjust="spacingAndGlyphs">text here.</text>
<text x="781.8" y="430.5" font-size="13.3" fill="#2a2a2a" text-anchor="end" textLength="119" lengthAdjust="spacingAndGlyphs">This is a sample text.</text>
<text x="781.8" y="446.5" font-size="13.3" fill="#2a2a2a" text-anchor="end" textLength="105.5" lengthAdjust="spacingAndGlyphs">Insert your desired</text>
<text x="781.8" y="461.5" font-size="13.3" fill="#2a2a2a" text-anchor="end" textLength="53.5" lengthAdjust="spacingAndGlyphs">text here.</text>
<rect x="380.500" y="275.500" width="274" height="250" fill="none" stroke="#a8a8a8" stroke-width="1" stroke-dasharray="2 1"/>
<path d="M517.500 271v-19" stroke="#a6a6a6" stroke-width="1"/>
<circle cx="380.5" cy="275.5" r="4.700" fill="#fbfbfb" stroke="#8a8a8a" stroke-width="1.800"/>
<circle cx="517.5" cy="275.5" r="4.700" fill="#fbfbfb" stroke="#8a8a8a" stroke-width="1.800"/>
<circle cx="654.5" cy="275.5" r="4.700" fill="#fbfbfb" stroke="#8a8a8a" stroke-width="1.800"/>
<circle cx="380.5" cy="400.3" r="4.700" fill="#fbfbfb" stroke="#8a8a8a" stroke-width="1.800"/>
<circle cx="654.5" cy="400.3" r="4.700" fill="#fbfbfb" stroke="#8a8a8a" stroke-width="1.800"/>
<circle cx="380.5" cy="525.5" r="4.700" fill="#fbfbfb" stroke="#8a8a8a" stroke-width="1.800"/>
<circle cx="517.5" cy="525.5" r="4.700" fill="#fbfbfb" stroke="#8a8a8a" stroke-width="1.800"/>
<circle cx="654.5" cy="525.5" r="4.700" fill="#fbfbfb" stroke="#8a8a8a" stroke-width="1.800"/>
<g fill="#fbfbfb" stroke="#8c8c8c" stroke-width="1.500" stroke-linejoin="round"><path d="M521.87 250.41A9.3 9.3 0 1 1 526.75 241.23L523.07 241.61A5.6 5.6 0 1 0 520.13 247.14Z"/><path d="M518.800 240.600h13.800l-7.200 8z"/></g>
<rect x="854" y="153" width="15.500" height="384.500" fill="#dcdcdc"/>
<rect x="854.500" y="155.500" width="14" height="14" fill="#fff" stroke="#ababab" stroke-width="1"/><path d="M857.700 164.600l4-4.600 4 4.600z" fill="#666"/>
<rect x="854.500" y="311.500" width="14" height="70" fill="#fff" stroke="#ababab" stroke-width="1"/>
<rect x="854.500" y="523" width="14" height="14" fill="#fff" stroke="#ababab" stroke-width="1"/><path d="M857.700 527.700l4 4.600 4-4.600z" fill="#666"/>
<path d="M861.700 541.800l4.200 4.600h-8.400zM861.700 546.500l4.200 4.600h-8.400z" fill="#5a5a5a"/>
<path d="M861.700 564l4.200-4.600h-8.400zM861.700 568.700l4.200-4.600h-8.400z" fill="#5a5a5a"/>
<rect x="140" y="594" width="730" height="1" fill="#c9c9c9"/>
<rect x="140" y="595" width="730" height="1.500" fill="#ececec"/>
<rect x="1" y="596.500" width="869" height="1" fill="#c9c9c9"/>
<rect x="1" y="597.500" width="869" height="22" fill="#f1f1f1"/>
<text x="8" y="612" font-size="12" fill="#444" text-anchor="start" textLength="56.5" lengthAdjust="spacingAndGlyphs">Slide 3 of 5</text>
<g fill="none" stroke="#555" stroke-width="1"><path d="M91.400 602.200H85.600v9.700h4.300l1.500 1.300 1.500-1.300h4.300v-3.800"/><path d="M91.400 602.200h5.800v1.600M91.400 602.200v10.600"/><path d="M93.200 606.800l1.600 1.900 3.400-4.300" stroke-width="1.100"/></g>
<g stroke="#555" stroke-width="1.100" fill="none"><path d="M353 609.500h12M353 612.500h12M355 606.500h8"/></g><path d="M356.500 604.500l2.500-3 2.500 3z" fill="#555"/>
<text x="370" y="612.5" font-size="12" fill="#444" text-anchor="start" textLength="29.7" lengthAdjust="spacingAndGlyphs">Notes</text>
<path d="M421.500 602h11.500v8h-6l-3 3v-3h-2.500z" fill="#555"/>
<text x="437.7" y="612.5" font-size="12" fill="#444" text-anchor="start" textLength="53.1" lengthAdjust="spacingAndGlyphs">Comments</text>
<rect x="510" y="597.500" width="38" height="21.500" fill="#c6c6c6"/>
<g fill="none" stroke="#555" stroke-width="1"><rect x="522.500" y="601.500" width="13" height="11.500"/><path d="M525.500 601.500v11.500M525.500 609.500h10"/><rect x="527.500" y="603.500" width="6" height="3.500"/></g>
<g fill="none" stroke="#555" stroke-width="1"><rect x="560.500" y="601.500" width="5" height="4.500"/><rect x="568.500" y="601.500" width="5" height="4.500"/><rect x="560.500" y="609" width="5" height="4.500"/><rect x="568.500" y="609" width="5" height="4.500"/></g>
<g fill="none" stroke="#555" stroke-width="1"><path d="M605 603c-2-1.500-4.500-1.500-6.500-0.500v10c2-1 4.500-1 6.500 0.500c2-1.500 4.500-1.500 6.500-0.500v-10c-2-1-4.500-1-6.500 0.500zM605 603v10"/><path d="M600 605.500h3.500M600 607.500h3.500M600 609.500h3.500M606.500 605.500h3.500M606.500 607.500h3.500M606.500 609.500h3.500" stroke-width="0.700"/></g>
<g fill="none" stroke="#555" stroke-width="1"><path d="M635.500 602.300h14" stroke-width="1.600"/><path d="M637.500 603v5.500h10v-5.500"/><path d="M642.500 608.500v4.500M639.500 613h6"/></g>
<path d="M667.500 607.500h5.500" stroke="#444" stroke-width="1.600"/>
<path d="M677 608H777" stroke="#8a8a8a" stroke-width="1"/><path d="M727 605.500v5" stroke="#8a8a8a" stroke-width="1"/>
<rect x="702" y="602" width="3.300" height="12" fill="#444"/>
<path d="M780.500 607.500h8M784.500 603.500v8" stroke="#444" stroke-width="1.600"/>
<text x="804.3" y="612.5" font-size="12" fill="#444" text-anchor="start" textLength="21" lengthAdjust="spacingAndGlyphs">54%</text>
<g fill="none" stroke="#555" stroke-width="1"><rect x="839.500" y="601.500" width="13" height="12"/><path d="M842 604l2 2M850 604l-2 2M842 611l2-2M850 611l-2-2"/></g>
<rect x="0" y="60" width="1.300" height="560" fill="#b7472a"/><rect x="869.500" y="60" width="1.500" height="560" fill="#b7472a"/><rect x="0" y="619" width="871" height="1" fill="#b7472a"/>
</svg>
</body></html>
